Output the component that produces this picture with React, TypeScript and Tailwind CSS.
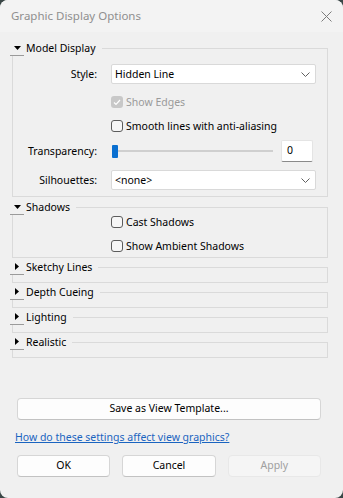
import React from 'react';

const font = "font-['Noto_Sans','Liberation_Sans',sans-serif]";
const txt = 'text-[10.5px] leading-4';

const DownTri = () => (
    <svg width="7" height="4" viewBox="0 0 7 4"><polygon points="0,0 7,0 3.5,4" fill="#000" /></svg>
);

const RightTri = () => (
    <svg width="4" height="7" viewBox="0 0 4 7"><polygon points="0,0 4,3.5 0,7" fill="#000" /></svg>
);

const Chevron = () => (
    <svg width="9" height="5" viewBox="0 0 9 5" className="mr-[5px]">
        <polyline points="0.5,0.5 4.5,4.5 8.5,0.5" fill="none" stroke="#606060" strokeWidth="1" />
    </svg>
);

const GroupHeader: React.FC<{ title: string; open?: boolean }> = ({ title, open }) => (
    <div className="flex h-4 items-start">
        <div className="flex h-4 w-[14px] items-center justify-center border-b border-[#9a9a9a]">
            {open ? <DownTri /> : <RightTri />}
        </div>
        <span className={`ml-[2px] ${txt} text-black`}>{title}</span>
        <div className="ml-1.5 mt-2 h-2 flex-1 border-t border-r border-[#dadada]" />
    </div>
);

const Checkbox: React.FC<{ label: string; checked?: boolean; disabled?: boolean }> = ({ label, checked, disabled }) => (
    <div className="flex h-3 items-center">
        {checked ? (
            <div className="flex h-3 w-3 items-center justify-center rounded-[3px] bg-[#c8c8c8]">
                <svg width="8" height="7" viewBox="0 0 8 7">
                    <polyline points="1,3.5 3,5.5 7,1" fill="none" stroke="#fff" strokeWidth="1.2" />
                </svg>
            </div>
        ) : (
            <div className="h-3 w-3 rounded-[3px] border border-[#5c5c5c] bg-[#f6f6f6]" />
        )}
        <span className={`ml-[3px] ${txt} ${disabled ? 'text-[#9a9a9a]' : 'text-black'}`}>{label}</span>
    </div>
);

const Select: React.FC<{ value: string }> = ({ value }) => (
    <div className="flex h-5 w-[205px] items-center justify-between rounded-[2px] border border-[#d9d9d9] bg-white">
        <span className={`pl-[3px] ${txt} text-black`}>{value}</span>
        <Chevron />
    </div>
);

const Label: React.FC<{ text: string }> = ({ text }) => (
    <div className={`w-[84px] text-right ${txt} text-black`}>{text}</div>
);

const Button: React.FC<{ text: string; disabled?: boolean }> = ({ text, disabled }) => (
    <div
        className={`flex h-[22px] items-center justify-center rounded-[4px] border text-[10.5px] ${disabled
            ? 'border-[#e8e8e8] bg-[#f5f5f5] text-[#a0a0a0]'
            : 'border-[#d6d6d6] border-b-[#c2c2c2] bg-[#fdfdfd] text-black'
            }`}
    >
        {text}
    </div>
);

const App: React.FC = () => {
    return (
        <div className={`h-[498px] w-[343px] bg-[#3a4747] ${font}`}>
            <div className="flex h-full flex-col overflow-hidden rounded-[8px] bg-[#f0f0f0]">
                {/* Title bar */}
                <div className="flex h-8 items-center justify-between bg-[#f3f3f3] pl-[11px] pr-[11px]">
                    <span className="text-[11.5px] text-[#8f8f8f]">Graphic Display Options</span>
                    <svg width="11" height="11" viewBox="0 0 11 11">
                        <path d="M0.5 0.5 L10.5 10.5 M10.5 0.5 L0.5 10.5" stroke="#7c7c7c" strokeWidth="1" />
                    </svg>
                </div>

                <div className="mt-[8px] pl-[10px] pr-[15px]">
                    {/* Model Display */}
                    <GroupHeader title="Model Display" open />
                    <div className="ml-[2px] border-x border-b border-[#dadada] pt-[8px] pb-[6px]">
                        <div className="flex h-5 items-center">
                            <Label text="Style:" />
                            <div className="ml-[14px]"><Select value="Hidden Line" /></div>
                        </div>
                        <div className="ml-[98px] mt-3"><Checkbox label="Show Edges" checked disabled /></div>
                        <div className="ml-[98px] mt-3"><Checkbox label="Smooth lines with anti-aliasing" /></div>
                        <div className="mt-2 flex h-[22px] items-center">
                            <Label text="Transparency:" />
                            <div className="relative ml-[15px] flex h-[13px] w-[161px] items-center">
                                <div className="h-[2px] w-full bg-[#cfcfcf]" />
                                <div className="absolute left-0 top-0 h-[13px] w-[6px] rounded-[1px] bg-[#0a6fd0]" />
                            </div>
                            <div className="ml-[8px] flex h-[22px] w-[32px] items-center rounded-[2px] border border-[#e4e4e4] border-b-[#8a8a8a] bg-white pl-[5px] text-[10.5px] text-black">0</div>
                        </div>
                        <div className="mt-2 flex h-5 items-center">
                            <Label text="Silhouettes:" />
                            <div className="ml-[14px]"><Select value="<none>" /></div>
                        </div>
                    </div>

                    {/* Shadows */}
                    <div className="mt-[2px]">
                        <GroupHeader title="Shadows" open />
                        <div className="ml-[2px] border-x border-b border-[#dadada] pt-[1px] pb-[5px]">
                            <div className="ml-[98px]"><Checkbox label="Cast Shadows" /></div>
                            <div className="ml-[98px] mt-3"><Checkbox label="Show Ambient Shadows" /></div>
                        </div>
                    </div>

                    {['Sketchy Lines', 'Depth Cueing', 'Lighting', 'Realistic'].map(t => (
                        <div key={t} className="mt-[1px]">
                            <GroupHeader title={t} />
                            <div className="ml-[2px] h-2 border-x border-b border-[#dadada]" />
                        </div>
                    ))}
                </div>

                {/* Footer */}
                <div className="mt-[40px] w-[321px] pl-[17px]">
                    <Button text="Save as View Template..." />
                    <div className={`-ml-[2px] mt-[9px] ${txt} text-[#1a64c0] underline`}>How do these settings affect view graphics?</div>
                    <div className="mt-[10px] grid grid-cols-3 gap-[12px]">
                        <Button text="OK" />
                        <Button text="Cancel" />
                        <Button text="Apply" disabled />
                    </div>
                </div>
            </div>
        </div>
    );
};

export default App;
